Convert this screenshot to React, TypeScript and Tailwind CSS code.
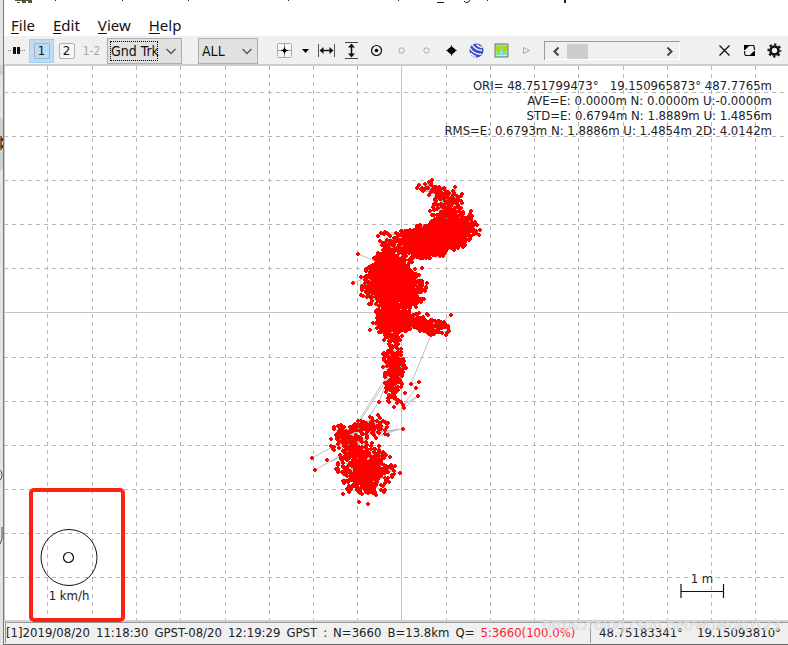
import type { ReactNode } from 'react';

const TAHOMA = "font-['DejaVu_Sans_Condensed','DejaVu_Sans',sans-serif]";

type Cluster = [x: number, y: number, sx: number, sy: number, angle: number, count: number];

const clusters: Cluster[] = [
  [430, 124, 7, 4, 10, 42],
  [445, 138, 8, 8, 30, 95],
  [429, 173, 16, 8, -22, 1000],
  [450, 162, 11, 9, 0, 360],
  [408, 176, 7, 7, 0, 90],
  [388, 174, 7, 5, 0, 34],
  [385, 209, 9, 12, 0, 850],
  [399, 222, 10, 10, 0, 420],
  [371, 221, 7, 7, 0, 140],
  [388, 253, 8, 10, 0, 370],
  [406, 256, 12, 5, 0, 150],
  [431, 262, 7, 4, 0, 85],
  [390, 306, 5, 15, 0, 230],
  [346, 374, 9, 9, 0, 170],
  [368, 361, 8, 5, 0, 75],
  [361, 405, 12, 11, 0, 520],
];

const outliers: [number, number][] = [
  [354, 188], [349, 217], [476, 164], [428, 114], [413, 122], [308, 392], [311, 404],
  [399, 363], [396, 407], [323, 394], [415, 316], [412, 322], [414, 330], [399, 339],
  [400, 342], [407, 318], [364, 438], [355, 436], [339, 428], [327, 373], [447, 249],
  [366, 264], [418, 202], [473, 159], [375, 336], [374, 170], [442, 269], [400, 182],
];

const outlierTracks =
  'M354 188L374 196M349 217L366 210M308 392L345 372M311 404L346 384L327 396M399 363L352 370L395 363L370 372M429 264L407 318L415 316M407 318L412 322M400 342L414 330L399 339L412 322M356 355L384 312L375 336L364 352M350 362L381 313M396 407L380 402M473 159L455 165M366 264L386 258M447 249L436 258M418 202L400 215M442 135L428 120M374 200L384 176';

function buildTrack() {
  let seed = 20190820;
  const rand = () => {
    seed = (seed + 0x6d2b79f5) | 0;
    let t = Math.imul(seed ^ (seed >>> 15), 1 | seed);
    t = (t + Math.imul(t ^ (t >>> 7), 61 | t)) ^ t;
    return ((t ^ (t >>> 14)) >>> 0) / 4294967296;
  };
  const pts: [number, number][] = [];
  for (const [cx, cy, sx, sy, angle, count] of clusters) {
    const a = (angle * Math.PI) / 180;
    for (let i = 0; i < count; i++) {
      const r = Math.min(Math.sqrt(-2 * Math.log(rand() + 1e-9)), 1.7 + rand() * 0.9);
      const t = rand() * 2 * Math.PI;
      const u = r * Math.cos(t) * sx;
      const v = r * Math.sin(t) * sy;
      pts.push([
        Math.round(cx + u * Math.cos(a) - v * Math.sin(a)),
        Math.round(cy + u * Math.sin(a) + v * Math.cos(a)),
      ]);
    }
  }
  let lines = '';
  for (let i = 1; i < pts.length; i++) {
    const [x0, y0] = pts[i - 1];
    const [x1, y1] = pts[i];
    if (Math.hypot(x1 - x0, y1 - y0) < 20) lines += `M${x0} ${y0}L${x1} ${y1}`;
  }
  const marks = [...pts, ...outliers]
    .map(([x, y]) => `M${x - 2} ${y - 1}h1v-1h2v1h1v2h-1v1h-2v-1h-1z`)
    .join('');
  return { lines, marks };
}

const track = buildTrack();
const gridX = [43, 88, 132, 176, 221, 265, 309, 353, 442, 486, 530, 574, 619, 663, 707, 751];
const gridY = [26, 70, 114, 158, 202, 291, 335, 379, 423, 467, 511];

function Tool({ label, children, on }: { label: string; children: ReactNode; on?: boolean }) {
  return (
    <button
      type="button"
      aria-label={label}
      className={`flex h-6 w-[25px] shrink-0 items-center justify-center ${on ? 'border border-[#99d1ff] bg-[#bcdcf4]' : ''}`}
    >
      {children}
    </button>
  );
}

function Digit({ n, on }: { n: string; on?: boolean }) {
  return (
    <span
      className={`flex size-4 items-center justify-center rounded-[2px] border text-[13px] leading-none ${on ? 'border-[#a5b4c0] bg-[#bcdcf4]' : 'border-[#b0b0b0] bg-[#f6f6f6]'}`}
    >
      {n}
    </span>
  );
}

function Icon({ children }: { children: ReactNode }) {
  return (
    <svg width="17" height="17" viewBox="0 0 17 17" fill="none" stroke="#111" aria-hidden="true">
      {children}
    </svg>
  );
}

function Combo({ label, value, className, focused }: { label: string; value: string; className: string; focused?: boolean }) {
  return (
    <div className={`relative h-[26px] shrink-0 ${className}`}>
      <select
        aria-label={label}
        defaultValue={value}
        className="size-full appearance-none rounded-none border border-[#adadad] bg-[#e1e1e1] pl-[3px] text-sm text-[#111] outline-none"
      >
        <option>{value}</option>
      </select>
      {focused && <span className="pointer-events-none absolute top-[3px] left-[3px] h-5 w-12 border border-dotted border-black" />}
      <svg className="pointer-events-none absolute top-2.5 right-1.5" width="10" height="7" viewBox="0 0 10 7" fill="none" stroke="#555" strokeWidth="1.3" aria-hidden="true">
        <path d="M.5 1L5 5.5L9.5 1" />
      </svg>
    </div>
  );
}

function TitleRemainder() {
  return (
    <svg className="block h-[14px] w-full" aria-hidden="true">
      <path d="M11 0h17v1h-17zM13 2h3v1h-3zM18 1h4v2h-4zM24 1h4v2h-4z" fill="#55553c" />
      <path d="M51 0h1v1h-1zM118 0h1v1h-1zM184 0h1v1h-1zM284 0h1v1h-1zM394 0h1v1h-1zM483 0h1v1h-1zM560 0h2v3h-2z" fill="#222" />
      <path d="M433 2.500h7M460 1q1 1.500 3 1.500t3-2.500" fill="none" stroke="#222" />
    </svg>
  );
}

function Desktop() {
  return (
    <svg className="w-[3px] shrink-0 self-stretch bg-[#e4e4e4]" aria-hidden="true">
      <path d="M0 65h3v10h-3zM0 118h3v52h-3z" fill="#cfcfcf" />
      <path d="M0 136h2v14h-2z" fill="#93602e" />
      <path d="M1 138h2v3h-2zM1 145h2v3h-2z" fill="#26385c" />
      <path d="M0 470q2 1 2 5t-2 5M2 527v12l-2 5" fill="none" stroke="#3d4c68" />
    </svg>
  );
}

function Menu() {
  return (
    <nav className="flex h-[22px] items-center gap-[18px] pb-px pl-[7px] font-['Noto_Sans','Open_Sans',sans-serif] text-[15px] leading-5">
      {['File', 'Edit', 'View', 'Help'].map((m) => (
        <button key={m} type="button">
          <span className="underline underline-offset-2">{m[0]}</span>
          {m.slice(1)}
        </button>
      ))}
    </nav>
  );
}

function Toolbar() {
  return (
    <div className="flex h-[30px] items-center border-b-2 border-[#cdcdcd] bg-[#f0f0f0] pt-px">
      <Tool label="Connect">
        <Icon>
          <path d="M0 8.500h4M12 8.500h5" stroke="#888" strokeDasharray="1 1" />
          <path d="M6.500 5v7M10.500 5v7" strokeWidth="3" />
          <path d="M8.500 5v7" stroke="#eee" />
        </Icon>
      </Tool>
      <Tool label="Solution 1" on><Digit n="1" on /></Tool>
      <Tool label="Solution 2"><Digit n="2" /></Tool>
      <Tool label="Solution 1-2"><span className="text-xs text-[#aaa]">1‑2</span></Tool>
      <Combo label="Plot type" value="Gnd Trk" className="ml-[3px] w-[75px]" focused />
      <Combo label="Quality flag" value="ALL" className="mr-3.5 ml-4 w-[60px]" />
      <Tool label="Center on origin">
        <Icon>
          <rect x="1.500" y="1.500" width="14" height="14" rx="1" stroke="#aaa" fill="#f7f7f7" />
          <path d="M8.500 2v13M2 8.500h13" stroke="#999" />
          <path d="M8.500 5v7M5 8.500h7" stroke="#222" />
          <circle cx="8.500" cy="8.500" r="2" fill="#000" stroke="none" />
        </Icon>
      </Tool>
      <button type="button" aria-label="Animation options" className="flex h-6 w-[17px] shrink-0 items-center justify-center">
        <svg width="7" height="4" aria-hidden="true"><path d="M0 0h7l-3.500 4z" /></svg>
      </button>
      <Tool label="Fit horizontal">
        <Icon>
          <path d="M.5 2v13M16.500 2v13" stroke="#555" />
          <path d="M3 8.500h11" strokeWidth="1.500" />
          <path d="M1.500 8.500l4-3.500v7zM15.500 8.500l-4-3.500v7z" fill="#111" stroke="none" />
        </Icon>
      </Tool>
      <Tool label="Fit vertical">
        <Icon>
          <path d="M2 .5h13M2 16.500h13" stroke="#444" />
          <path d="M8.500 3v11" strokeWidth="1.500" />
          <path d="M8.500 1.500l-3.500 4h7zM8.500 15.500l-3.500-4h7z" fill="#111" stroke="none" />
        </Icon>
      </Tool>
      <Tool label="Show track point">
        <Icon><circle cx="8.500" cy="8.500" r="5" strokeWidth="1.200" /><circle cx="8.500" cy="8.500" r="1.800" fill="#000" stroke="none" /></Icon>
      </Tool>
      <Tool label="Fix center"><Icon><circle cx="8.500" cy="8.500" r="2.700" stroke="#aaa" /></Icon></Tool>
      <Tool label="Fix horizontal"><Icon><circle cx="8.500" cy="8.500" r="2.700" stroke="#aaa" /></Icon></Tool>
      <Tool label="Fix vertical">
        <Icon><path d="M8.500 3v11M3 8.500h11" stroke="#666" /><path d="M8.500 4l1.500 1.500 2 1.500 1 1.500-1 1.500-2 1.500-1.500 1.500-1.500-1.500-2-1.500-1-1.500 1-1.500 2-1.500z" fill="#000" stroke="none" /></Icon>
      </Tool>
      <Tool label="Google Earth view">
        <Icon>
          <circle cx="8.500" cy="8.500" r="7" fill="#3f4bc8" stroke="none" />
          <path d="M4.500 3q2 4.500 9.500 5.500M2 6q3 6 11.500 6.500M8.500 2.500q2 2.500 6 3M2.500 11q2 3 5.500 3.500" stroke="#f4f4ff" strokeWidth="1.400" />
        </Icon>
      </Tool>
      <Tool label="Google Map view">
        <Icon>
          <rect x="2" y="2" width="13" height="13" fill="#8be0dc" stroke="#777" />
          <path d="M3 4h5v4l-2 1v4H4V9H3zM9 4h5v5h-2v3h-2V8H9z" fill="#a6d82a" stroke="none" />
          <path d="M3 13.500h11" stroke="#dbe9b7" />
        </Icon>
      </Tool>
      <Tool label="Animate"><Icon><path d="M5.500 5.500v6l6-3z" stroke="#aaa" /></Icon></Tool>
      <div className="ml-[5px] flex h-[19px] w-[136px] shrink-0 items-center border-t border-l border-[#999] bg-[#f0f0f0] shadow-[inset_-1px_-1px_0_#fff]">
        <button type="button" aria-label="Scroll back" className="flex w-[22px] justify-center">
          <svg width="8" height="9" fill="none" stroke="#444" strokeWidth="2" aria-hidden="true"><path d="M6.500.500l-4 4 4 4" /></svg>
        </button>
        <div className="h-[15px] w-[21px] bg-[#cdcdcd]" />
        <button type="button" aria-label="Scroll forward" className="mr-px ml-auto flex w-[18px] justify-center">
          <svg width="8" height="9" fill="none" stroke="#444" strokeWidth="2" aria-hidden="true"><path d="M1.500.500l4 4-4 4" /></svg>
        </button>
      </div>
      <div className="mr-px ml-auto flex">
        <Tool label="Clear"><Icon><path d="M3.500 3.500l10 10M13.500 3.500l-10 10" strokeWidth="1.300" /></Icon></Tool>
        <Tool label="Reload">
          <Icon>
            <path d="M7 3.500h5.500q1 1 1 4.500M10 13.500H4.500q-1-1-1-4.500" strokeWidth="1.200" />
            <path d="M3 3v5h1l4-4V3zM14 14V9h-1l-4 4v1z" fill="#000" stroke="none" />
          </Icon>
        </Tool>
        <Tool label="Options">
          <Icon><circle cx="8.500" cy="8.500" r="4" strokeWidth="2.600" /><circle cx="8.500" cy="8.500" r="6" strokeWidth="2" strokeDasharray="2.400 2.312" strokeDashoffset="1.200" /></Icon>
        </Tool>
      </div>
    </div>
  );
}

function Plot() {
  return (
    <main className="relative border-l border-[#ccc] bg-white">
      <svg className="-ml-px block h-[554px] w-full min-w-[784px]" role="img" aria-label="Ground track plot">
        <g stroke="#b8b8b8" strokeDasharray="4 4" shapeRendering="crispEdges">
          {gridX.map((x) => <path key={x} d={`M${x + 0.5} 0V554`} />)}
          {gridY.map((y) => <path key={y} d={`M0 ${y + 0.5}H2000`} />)}
        </g>
        <path d="M397.500 0V554M0 246.500H2000" stroke="#c4c4c4" shapeRendering="crispEdges" />
        <path d={track.lines + outlierTracks} stroke="#bdbdbd" fill="none" />
        <path d={track.marks} fill="#f00" shapeRendering="crispEdges" />
        <g stroke="#111" fill="none">
          <circle cx="65" cy="491.500" r="28" />
          <circle cx="64.500" cy="491.500" r="5" strokeWidth="1.200" />
          <path d="M677 518v14M719.500 518v14M677 525.500h42" strokeWidth="1.200" />
        </g>
        <g className={`${TAHOMA} text-[13px]`} fill="#222" textAnchor="middle">
          <text x="65" y="534">1 km/h</text>
          <text x="698" y="517" stroke="#fff" strokeWidth="3" paintOrder="stroke">1 m</text>
        </g>
      </svg>
      <div className="absolute top-[422px] left-6 z-10 h-[134px] w-24 rounded-[5px] border-4 border-[#ff2112]" />
      <div className="absolute top-3 right-4 text-right text-[13px] leading-[15px] whitespace-pre text-[#222]">
        <p>ORI= 48.751799473°   19.150965873° 487.7765m</p>
        <p>AVE=E: 0.0000m N: 0.0000m U:-0.0000m</p>
        <p>STD=E: 0.6794m N: 1.8889m U: 1.4856m</p>
        <p>RMS=E: 0.6793m N: 1.8886m U: 1.4854m 2D: 4.0142m</p>
      </div>
    </main>
  );
}

const statusFields = ['[1]2019/08/20', '11:18:30', 'GPST-08/20', '12:19:29', 'GPST', ':', 'N=3660', 'B=13.8km', 'Q='];

function StatusBar() {
  return (
    <footer className="relative flex h-[25px] border-t-2 border-b border-t-[#d2d2d2] border-b-[#666] bg-[#f0f0f0] text-[13px] leading-5 whitespace-pre text-[#222]">
      <div className="mb-px ml-px flex flex-1 gap-1.5 border-t border-l border-[#999]">
        {statusFields.map((f) => <span key={f}>{f}</span>)}
        <span className="text-[#ff1a2e]">5:3660(100.0%)</span>
      </div>
      <div className="mb-px ml-0.5 flex w-[198px] shrink-0 gap-3.5 border-t border-l border-[#999] pl-2">
        <span>48.75183341°</span>
        <span>19.15093810°</span>
      </div>
      <span className="pointer-events-none absolute -top-2 right-2 font-['Noto_Sans',sans-serif] text-[15px] text-white/50 [text-shadow:0_0_1px_#bbb]">
        https://blog.csdn.net/wuwuku123
      </span>
    </footer>
  );
}

export default function App() {
  return (
    <div className={`flex overflow-hidden bg-white text-[#111] ${TAHOMA}`}>
      <Desktop />
      <div className="min-w-0 flex-1 border-l border-[#777]">
        <TitleRemainder />
        <Menu />
        <Toolbar />
        <Plot />
        <StatusBar />
      </div>
    </div>
  );
}
